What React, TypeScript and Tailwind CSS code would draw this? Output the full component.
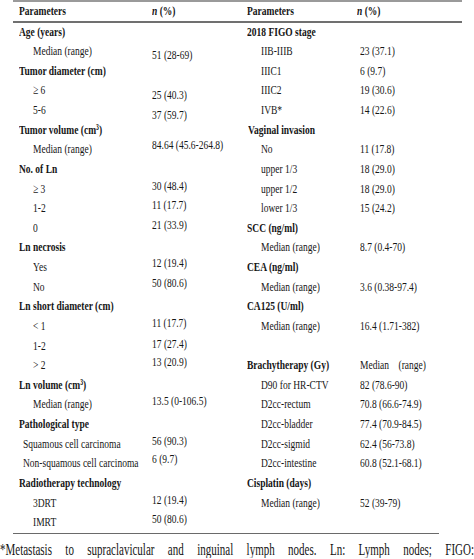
type Row = {
  label: string;
  value?: string;
  kind: "head" | "sub" | "sub2" | "blank";
  shift?: string;
};

const leftRows: Row[] = [
  { label: "Age (years)", kind: "head" },
  { label: "Median (range)", value: "51 (28-69)", kind: "sub", shift: "translate-y-[4px]" },
  { label: "Tumor diameter (cm)", kind: "head" },
  { label: "≥ 6", value: "25 (40.3)", kind: "sub", shift: "translate-y-[5px]" },
  { label: "5-6", value: "37 (59.7)", kind: "sub", shift: "translate-y-[5px]" },
  { label: "Tumor volume (cm³)", kind: "head" },
  { label: "Median (range)", value: "84.64 (45.6-264.8)", kind: "sub", shift: "-translate-y-[4px]" },
  { label: "No. of Ln", kind: "head" },
  { label: "≥ 3", value: "30 (48.4)", kind: "sub", shift: "-translate-y-[3px]" },
  { label: "1-2", value: "11 (17.7)", kind: "sub", shift: "-translate-y-[3px]" },
  { label: "0", value: "21 (33.9)", kind: "sub", shift: "-translate-y-[3px]" },
  { label: "Ln necrosis", kind: "head" },
  { label: "Yes", value: "12 (19.4)", kind: "sub", shift: "-translate-y-[4px]" },
  { label: "No", value: "50 (80.6)", kind: "sub", shift: "-translate-y-[4px]" },
  { label: "Ln short diameter (cm)", kind: "head" },
  { label: "< 1", value: "11 (17.7)", kind: "sub", shift: "-translate-y-[3px]" },
  { label: "1-2", value: "17 (27.4)", kind: "sub", shift: "-translate-y-[2px]" },
  { label: "> 2", value: "13 (20.9)", kind: "sub", shift: "-translate-y-[3px]" },
  { label: "Ln volume (cm³)", kind: "head" },
  { label: "Median (range)", value: "13.5 (0-106.5)", kind: "sub", shift: "-translate-y-[3px]" },
  { label: "Pathological type", kind: "head" },
  { label: "Squamous cell carcinoma", value: "56 (90.3)", kind: "sub2", shift: "-translate-y-[3px]" },
  { label: "Non-squamous cell carcinoma", value: "6 (9.7)", kind: "sub2", shift: "-translate-y-[4px]" },
  { label: "Radiotherapy technology", kind: "head" },
  { label: "3DRT", value: "12 (19.4)", kind: "sub", shift: "-translate-y-[3px]" },
  { label: "IMRT", value: "50 (80.6)", kind: "sub", shift: "-translate-y-[3px]" },
];

const rightRows: Row[] = [
  { label: "2018 FIGO stage", kind: "head" },
  { label: "IIB-IIIB", value: "23 (37.1)", kind: "sub" },
  { label: "IIIC1", value: "6 (9.7)", kind: "sub" },
  { label: "IIIC2", value: "19 (30.6)", kind: "sub" },
  { label: "IVB*", value: "14 (22.6)", kind: "sub" },
  { label: "Vaginal invasion", kind: "head", shift: "pl-[8px]" },
  { label: "No", value: "11 (17.8)", kind: "sub" },
  { label: "upper 1/3", value: "18 (29.0)", kind: "sub" },
  { label: "upper 1/2", value: "18 (29.0)", kind: "sub" },
  { label: "lower 1/3", value: "15 (24.2)", kind: "sub" },
  { label: "SCC (ng/ml)", kind: "head" },
  { label: "Median (range)", value: "8.7 (0.4-70)", kind: "sub" },
  { label: "CEA (ng/ml)", kind: "head" },
  { label: "Median (range)", value: "3.6 (0.38-97.4)", kind: "sub" },
  { label: "CA125 (U/ml)", kind: "head" },
  { label: "Median (range)", value: "16.4 (1.71-382)", kind: "sub" },
  { label: "", kind: "blank" },
  { label: "Brachytherapy (Gy)", value: "Median    (range)", kind: "head" },
  { label: "D90 for HR-CTV", value: "82 (78.6-90)", kind: "sub" },
  { label: "D2cc-rectum", value: "70.8 (66.6-74.9)", kind: "sub" },
  { label: "D2cc-bladder", value: "77.4 (70.9-84.5)", kind: "sub" },
  { label: "D2cc-sigmid", value: "62.4 (56-73.8)", kind: "sub" },
  { label: "D2cc-intestine", value: "60.8 (52.1-68.1)", kind: "sub" },
  { label: "Cisplatin (days)", kind: "head" },
  { label: "Median (range)", value: "52 (39-79)", kind: "sub" },
  { label: "", kind: "blank" },
];

// text in the source scan is stretched vertically
const Tall = ({ children, className = "" }: { children: React.ReactNode; className?: string }) => (
  <span className={`inline-block whitespace-pre scale-y-[1.4] ${className}`}>{children}</span>
);

const Column = ({
  rows,
  side,
}: {
  rows: Row[];
  side: "left" | "right";
}) => {
  const isLeft = side === "left";
  return (
    <div className={isLeft ? "w-[227px]" : "w-[222px]"}>
      <div className="flex h-[19px] items-center font-bold">
        <div className={isLeft ? "w-[139px] pl-[6px]" : "w-[117px] pl-[7px]"}>
          <Tall>Parameters</Tall>
        </div>
        <div>
          <Tall>
            <i>n</i> (%)
          </Tall>
        </div>
      </div>
      <div className="h-[1.5px] bg-[#707070]" />
      <div className="flex flex-col">
        {rows.map((r, i) => {
          let labelPad = isLeft ? "pl-[6px]" : "pl-[7px]";
          if (r.kind === "sub") labelPad = isLeft ? "pl-[20px]" : "pl-[21px]";
          if (r.kind === "sub2") labelPad = "pl-[10px]";
          if (r.kind === "head" && r.shift && !isLeft) labelPad = r.shift;
          return (
            <div key={i} className="flex h-[19.64px] items-center">
              <div className={`${isLeft ? "w-[139px]" : "w-[120px]"} shrink-0 ${labelPad} ${r.kind === "head" ? "font-bold" : ""}`}>
                <Tall>{r.label}</Tall>
              </div>
              {r.value && (
                <div className={isLeft ? r.shift : ""}>
                  <Tall>{r.value}</Tall>
                </div>
              )}
            </div>
          );
        })}
      </div>
      <div className={`h-px bg-[#6a6a6a] ${isLeft ? "w-full" : "w-[199px]"}`} />
    </div>
  );
};

export default function App() {
  return (
    <div
      className="relative h-[559px] w-[474px] overflow-hidden bg-white text-[9.5px] leading-none text-[#161616]"
      style={{ fontFamily: '"Liberation Serif", "Times New Roman", serif' }}
    >
      <div className="ml-[13px] w-[449px]">
        <div className="h-[2px] bg-[#9a9a9a]" />
        <div className="flex">
          <Column rows={leftRows} side="left" />
          <Column rows={rightRows} side="right" />
        </div>
      </div>
      <div className="mt-[8px] w-[474px] origin-top scale-y-[1.45] text-[11px] leading-[11px]">
        <p className="text-justify [text-align-last:justify]">
          *Metastasis to supraclavicular and inguinal lymph nodes. Ln: Lymph nodes; FIGO:
        </p>
      </div>
    </div>
  );
}
